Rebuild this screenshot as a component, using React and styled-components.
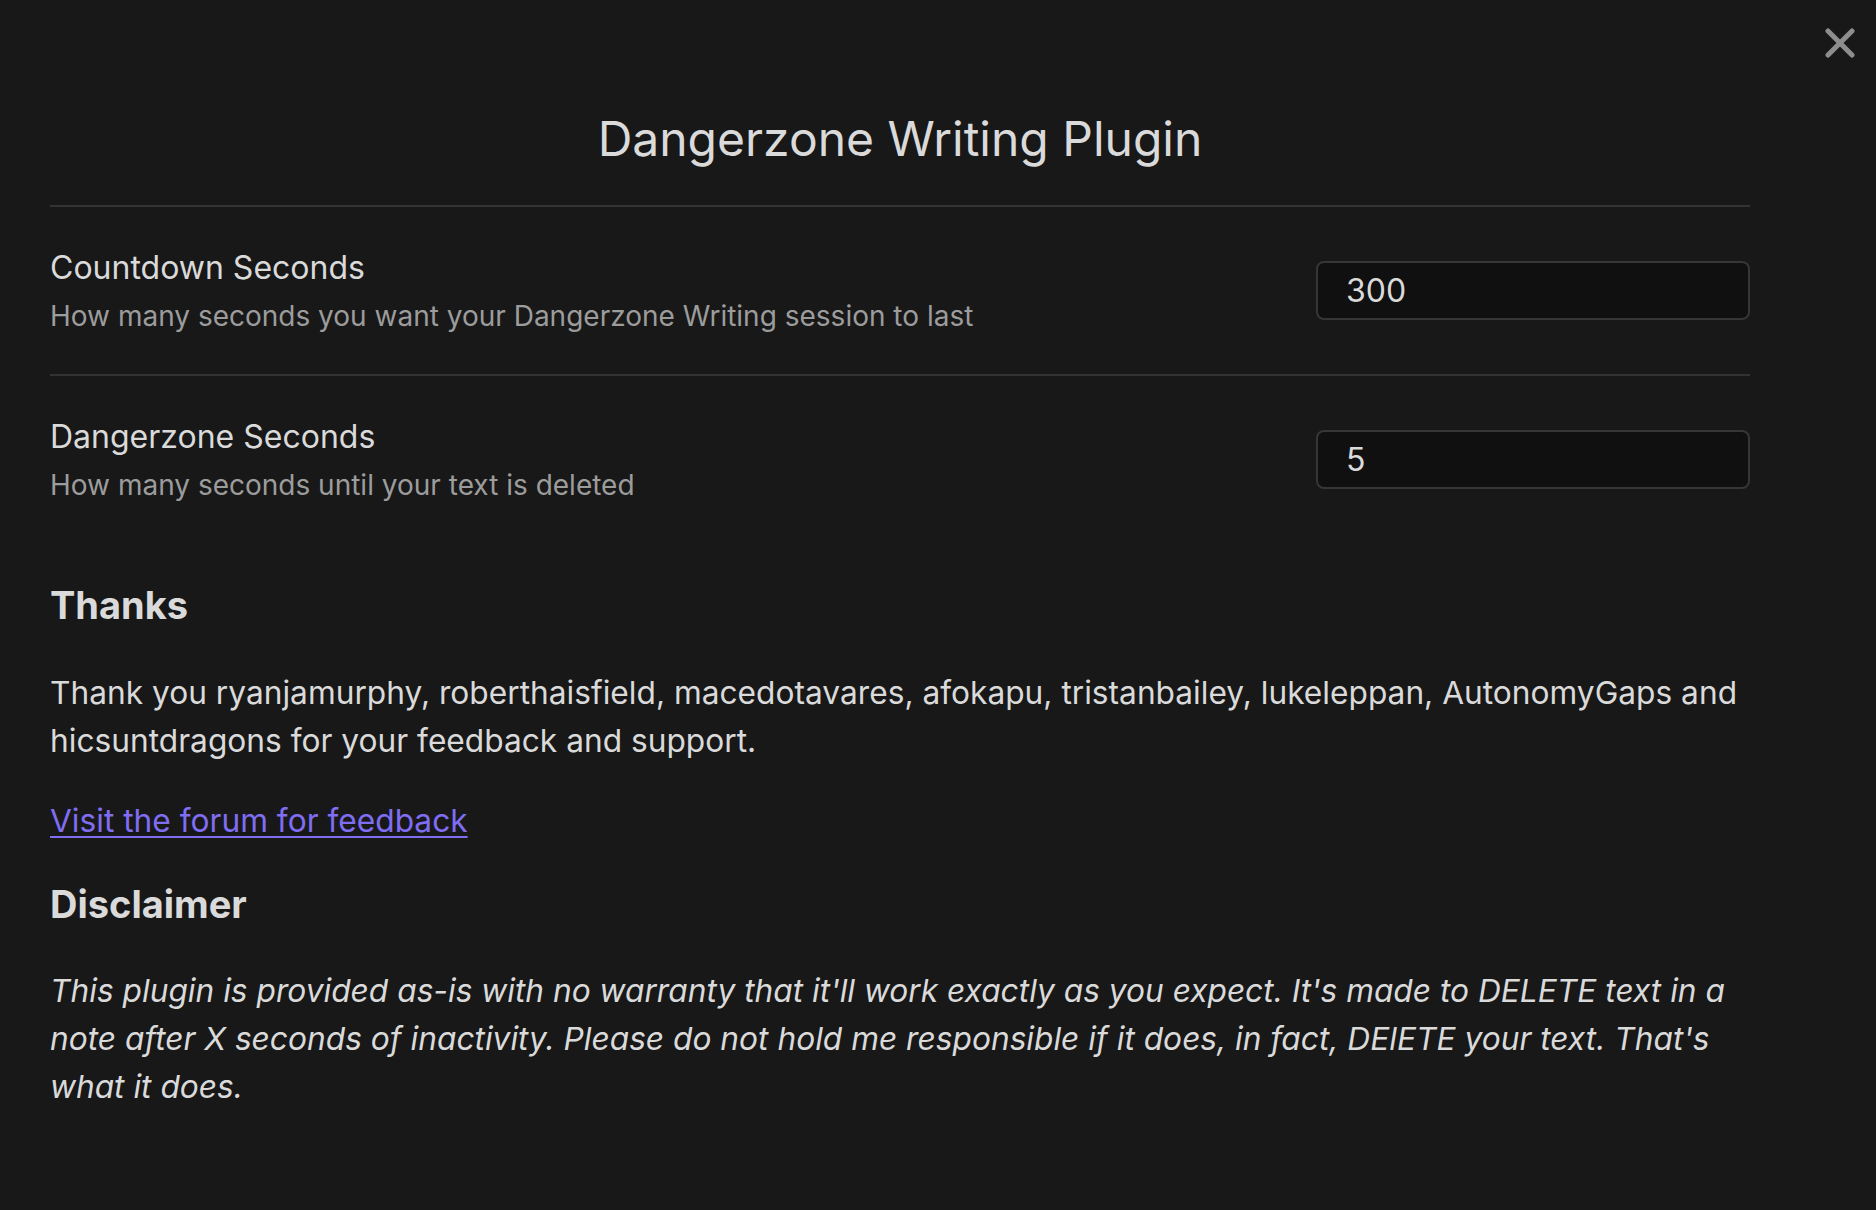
import React from 'react'
import styled, { createGlobalStyle } from 'styled-components'

const GlobalStyle = createGlobalStyle`
  html, body {
    margin: 0;
    padding: 0;
    background: #181818;
  }
  body {
    font-family: Inter, "Noto Sans", sans-serif;
    color: #dadada;
    -webkit-font-smoothing: antialiased;
  }
`

const settings = [
  { name: 'Countdown Seconds', desc: 'How many seconds you want your Dangerzone Writing session to last', value: '300' },
  { name: 'Dangerzone Seconds', desc: 'How many seconds until your text is deleted', value: '5' },
]

const App = () => {
  return (
    <>
      <GlobalStyle />
      <Modal>
        <CloseButton aria-label="Close">
          <svg width="30" height="30" viewBox="0 0 30 30">
            <path d="M3 3 L27 27 M27 3 L3 27" stroke="#8e8e8e" strokeWidth="5" strokeLinecap="round" fill="none" />
          </svg>
        </CloseButton>
        <Content>
          <Title>Dangerzone Writing Plugin</Title>
          {settings.map((s) => (
            <SettingItem key={s.name}>
              <SettingInfo>
                <SettingName>{s.name}</SettingName>
                <SettingDesc>{s.desc}</SettingDesc>
              </SettingInfo>
              <TextInput type="text" defaultValue={s.value} />
            </SettingItem>
          ))}
          <Heading top={38}>Thanks</Heading>
          <Para top={39}>
            Thank you ryanjamurphy, roberthaisfield, macedotavares, afokapu, tristanbailey, lukeleppan, AutonomyGaps and
            hicsuntdragons for your feedback and support.
          </Para>
          <Para top={32}>
            <Link href="#">Visit the forum for feedback</Link>
          </Para>
          <Heading top={35}>Disclaimer</Heading>
          <Para top={38} italic>
            This plugin is provided as-is with no warranty that it'll work exactly as you expect. It's made to DELETE text in a
            note after X seconds of inactivity. Please do not hold me responsible if it does, in fact, DElETE your text. That's
            what it does.
          </Para>
        </Content>
      </Modal>
    </>
  )
}

export default App

const Modal = styled.div`
  position: relative;
  width: 1876px;
  min-height: 1210px;
  box-sizing: border-box;
  background: #181818;
  padding: 110px 0 0 50px;
`

const CloseButton = styled.div`
  position: absolute;
  top: 28px;
  right: 21px;
  width: 30px;
  height: 30px;
  display: flex;
  align-items: center;
  justify-content: center;
  cursor: pointer;
`

const Content = styled.div`
  width: 1700px;
`

const Title = styled.h1`
  margin: 0;
  font-size: 48px;
  line-height: 57.6px;
  font-weight: 400;
  text-align: center;
  color: #dadada;
  padding-bottom: 37px;
  border-bottom: 2px solid #333333;
`

const SettingItem = styled.div`
  display: flex;
  align-items: center;
  justify-content: space-between;
  padding: 38px 0;
  & + & {
    border-top: 2px solid #333333;
  }
`

const SettingInfo = styled.div`
  display: flex;
  flex-direction: column;
`

const SettingName = styled.div`
  font-size: 32px;
  line-height: 45px;
  color: #dadada;
`

const SettingDesc = styled.div`
  font-size: 28px;
  line-height: 40px;
  padding-top: 6px;
  color: #9c9c9c;
`

const TextInput = styled.input`
  width: 434px;
  height: 59px;
  box-sizing: border-box;
  background: #101010;
  border: 2px solid #363636;
  border-radius: 8px;
  padding: 0 28px;
  font-family: Inter, sans-serif;
  font-size: 32px;
  color: #dadada;
  outline: none;
`

const Heading = styled.h3`
  margin: ${(p) => p.top}px 0 0;
  font-size: 38px;
  line-height: 49px;
  font-weight: 700;
  color: #dadada;
`

const Para = styled.p`
  margin: ${(p) => p.top}px 0 0;
  font-size: 31.7px;
  line-height: 48px;
  font-style: ${(p) => (p.italic ? 'italic' : 'normal')};
  color: #dadada;
`

const Link = styled.a`
  color: #7f6df2;
  text-decoration: underline;
  text-underline-offset: 4px;
  text-decoration-thickness: 2px;
`
